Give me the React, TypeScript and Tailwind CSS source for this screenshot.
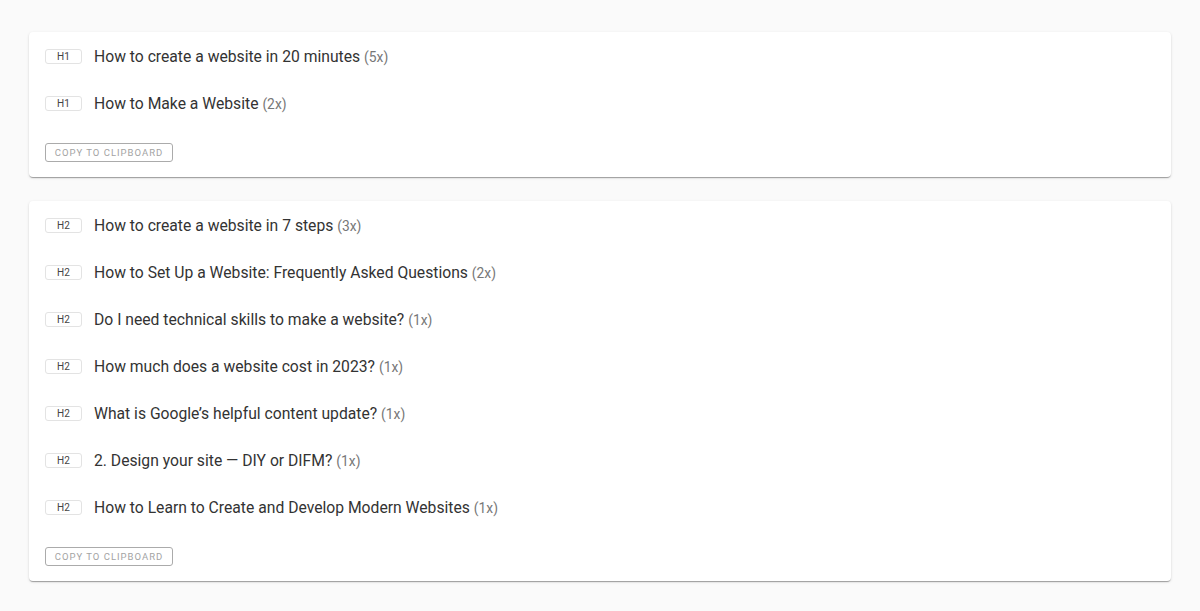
import React from "react";

type Item = { tag: string; text: string; count: number };

const h1: Item[] = [
  { tag: "H1", text: "How to create a website in 20 minutes", count: 5 },
  { tag: "H1", text: "How to Make a Website", count: 2 },
];

const h2: Item[] = [
  { tag: "H2", text: "How to create a website in 7 steps", count: 3 },
  { tag: "H2", text: "How to Set Up a Website: Frequently Asked Questions", count: 2 },
  { tag: "H2", text: "Do I need technical skills to make a website?", count: 1 },
  { tag: "H2", text: "How much does a website cost in 2023?", count: 1 },
  { tag: "H2", text: "What is Google’s helpful content update?", count: 1 },
  { tag: "H2", text: "2. Design your site — DIY or DIFM?", count: 1 },
  { tag: "H2", text: "How to Learn to Create and Develop Modern Websites", count: 1 },
];

function Card({ items }: { items: Item[] }) {
  return (
    <div className="bg-white rounded-[4px] px-4 pt-[1px] pb-[15px] shadow-[0_2px_1px_-1px_rgba(0,0,0,0.2),0_1px_1px_0_rgba(0,0,0,0.14),0_1px_3px_0_rgba(0,0,0,0.12)]">
      {items.map((it, i) => (
        <div key={i} className="flex items-center h-[47px]">
          <span className="flex items-center justify-center w-[37px] h-[15px] border border-[#e3e3e3] rounded-[3px] text-[10px] text-[#444] leading-none">
            {it.tag}
          </span>
          <span className="ml-[12px] text-[15.7px] text-[#333] leading-none">
            {it.text} <span className="text-[13.8px] text-[#777]">({it.count}x)</span>
          </span>
        </div>
      ))}
      <button className="mt-[16px] flex items-center justify-center w-[128px] h-[19px] border border-[#ababab] rounded-[3px] text-[9.5px] tracking-[1px] text-[#a3a3a3] leading-none">
        COPY TO CLIPBOARD
      </button>
    </div>
  );
}

export default function App() {
  return (
    <div
      className="min-h-[611px] bg-[#fafafa] px-[29px] pt-[32px] flex flex-col gap-[24px]"
      style={{ fontFamily: "Roboto, 'Liberation Sans', sans-serif" }}
    >
      <Card items={h1} />
      <Card items={h2} />
    </div>
  );
}
